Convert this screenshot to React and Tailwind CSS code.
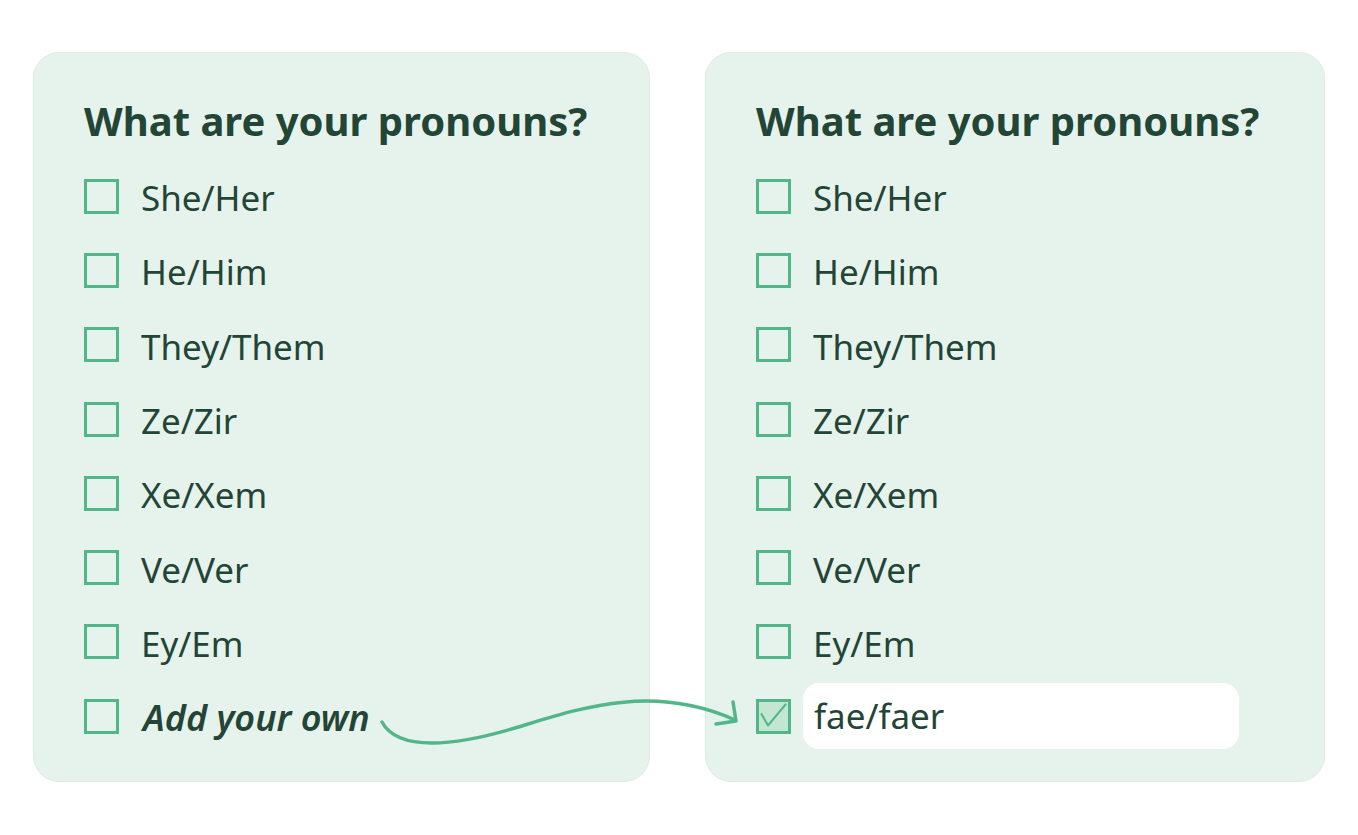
import React from 'react';

const options = ['She/Her', 'He/Him', 'They/Them', 'Ze/Zir', 'Xe/Xem', 'Ve/Ver', 'Ey/Em'];

const Box = ({ checked }) => (
  <div
    className={`w-[35px] h-[35px] shrink-0 border-[3px] border-[#52b788] ${checked ? 'bg-[#c3e6d3]' : ''}`}
  >
    {checked && (
      <svg width="29" height="29" viewBox="0 0 29 29" fill="none">
        <path d="M2.5 12 L9 23.5 L26.5 2.5" stroke="#52b788" strokeWidth="2" strokeLinecap="round" strokeLinejoin="round" />
      </svg>
    )}
  </div>
);

const Row = ({ children, checked }) => (
  <div className="h-[74.3px] flex items-center">
    <Box checked={checked} />
    {children}
  </div>
);

const Card = ({ custom }) => (
  <div
    className={`${custom ? 'w-[620px]' : 'w-[617px]'} h-[730px] rounded-[26px] bg-[#e6f3ec] border border-[#dcede4] pl-[50px] pt-[44px]`}
  >
    <h2 className="text-[40px] leading-[48px] font-bold text-[#234536]">What are your pronouns?</h2>
    <div className="mt-[14px] flex flex-col">
      {options.map((o) => (
        <Row key={o}>
          <span className="ml-[22px] text-[35px] leading-[44px] text-[#234536] translate-y-[2px]">{o}</span>
        </Row>
      ))}
      {custom ? (
        <Row checked>
          <div className="ml-[12px] w-[436px] h-[66px] bg-white rounded-[16px] flex items-center px-[11px]">
            <span className="text-[35px] leading-[44px] text-[#234536]">fae/faer</span>
          </div>
        </Row>
      ) : (
        <Row>
          <span className="ml-[24px] text-[36px] leading-[44px] italic font-semibold text-[#234536] translate-y-[2px]">
            Add your own
          </span>
        </Row>
      )}
    </div>
  </div>
);

export default function App() {
  return (
    <div className="relative w-[1358px] h-[835px] bg-white pl-[33px] pt-[52px] flex gap-[55px] font-['Noto_Sans',sans-serif]">
      <Card />
      <Card custom />
      <svg className="absolute left-0 top-0 pointer-events-none" width="1358" height="835" viewBox="0 0 1358 835" fill="none">
        <path
          d="M382 722 C 398 752, 455 746, 515 728 S 650 682, 735 720"
          stroke="#52b788"
          strokeWidth="3.5"
          strokeLinecap="round"
        />
        <path d="M733 702 L736 721 L716 724" stroke="#52b788" strokeWidth="3.5" strokeLinecap="round" strokeLinejoin="round" />
      </svg>
    </div>
  );
}
